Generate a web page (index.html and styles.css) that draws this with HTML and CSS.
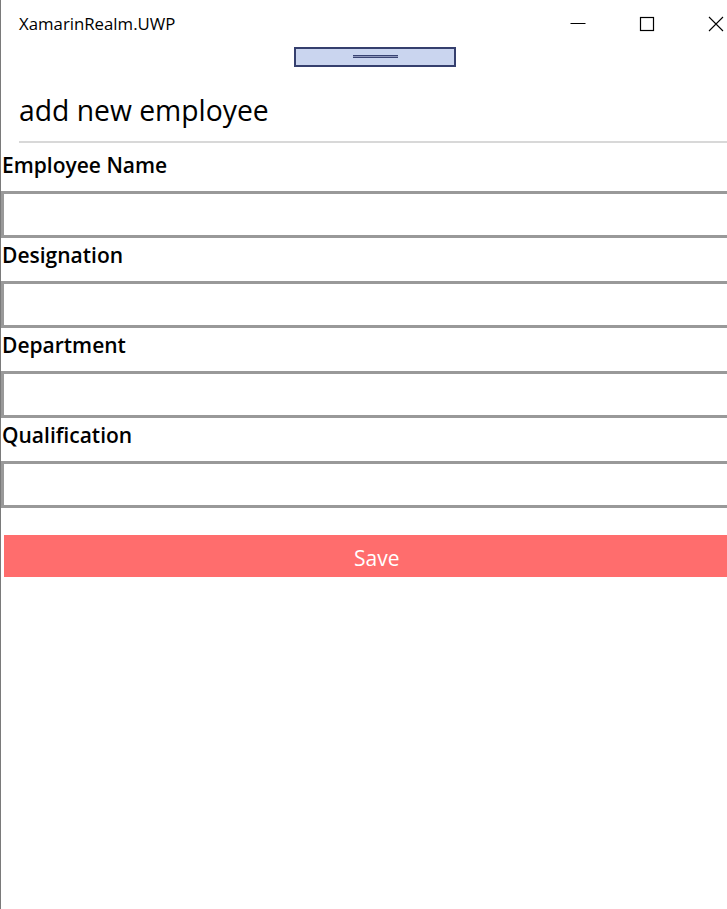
FILE: index.html
```html
<!DOCTYPE html>
<html lang="en">
<head>
<meta charset="utf-8">
<title>XamarinRealm.UWP</title>
<link rel="stylesheet" href="styles.css">
</head>
<body>
<div class="window">
  <div class="titlebar">
    <span class="app-title">XamarinRealm.UWP</span>
    <div class="controls">
      <div class="ctl">
        <svg width="16" height="16" viewBox="0 0 16 16"><path d="M0.5 7.5H15.5" stroke="#000" stroke-width="1"/></svg>
      </div>
      <div class="ctl">
        <svg width="16" height="16" viewBox="0 0 16 16"><rect x="1.5" y="1.5" width="13" height="13" fill="none" stroke="#000" stroke-width="1.2"/></svg>
      </div>
      <div class="ctl">
        <svg width="16" height="16" viewBox="0 0 16 16"><path d="M1 1L15 15M15 1L1 15" stroke="#000" stroke-width="1.1"/></svg>
      </div>
    </div>
  </div>
  <div class="grip-row">
    <div class="grip"><div class="grip-lines"></div></div>
  </div>
  <div class="page-header">
    <h1 class="page-title">add new employee</h1>
  </div>
  <form class="form">
    <label class="field-label first">Employee Name</label>
    <input class="field-input" type="text">
    <label class="field-label">Designation</label>
    <input class="field-input" type="text">
    <label class="field-label">Department</label>
    <input class="field-input" type="text">
    <label class="field-label">Qualification</label>
    <input class="field-input" type="text">
    <button class="save-btn" type="button">Save</button>
  </form>
</div>
</body>
</html>
```
FILE: styles.css
```css
html, body {
  margin: 0;
  padding: 0;
  background: #ffffff;
}
body {
  font-family: "Open Sans", "Noto Sans", sans-serif;
  color: #000;
}
.window {
  width: 727px;
  height: 909px;
  box-sizing: border-box;
  border-left: 1px solid #7a7a7a;
  overflow: hidden;
  position: relative;
}
.titlebar {
  height: 47px;
  display: flex;
  align-items: center;
  padding-left: 18px;
}
.app-title {
  font-size: 16.8px;
  color: #000;
  letter-spacing: 0;
}
.controls {
  margin-left: auto;
  margin-right: -23px;
  display: flex;
  align-self: stretch;
}
.ctl {
  width: 69px;
  display: flex;
  align-items: center;
  justify-content: center;
}
.grip-row {
  height: 20px;
  display: flex;
  padding-left: 293px;
}
.grip {
  width: 162px;
  height: 20px;
  box-sizing: border-box;
  border: 2px solid #353f6e;
  background: #cad5ef;
  display: flex;
  align-items: center;
  justify-content: center;
}
.grip-lines {
  width: 45px;
  height: 1px;
  border-top: 1px solid #3a4473;
  border-bottom: 1px solid #3a4473;
  background: #8e97bb;
  margin-bottom: 1px;
}
.page-header {
  position: relative;
  padding-top: 23px;
}
.page-header::before {
  content: "";
  position: absolute;
  left: -1px;
  top: 15px;
  width: 1px;
  height: 41px;
  background: #8a2b2e;
}
.page-title {
  margin: 0 0 0 18px;
  font-size: 28.3px;
  font-weight: 400;
  line-height: 40px;
  padding-bottom: 11px;
  border-bottom: 2px solid #d8d8d8;
}
.form {
  display: flex;
  flex-direction: column;
  margin: 0;
}
.field-label {
  display: block;
  height: 43px;
  box-sizing: border-box;
  padding-left: 1px;
  padding-top: 3px;
  font-size: 21px;
  font-weight: 600;
  line-height: 28px;
}
.field-label.first {
  height: 48px;
  padding-top: 8px;
}
.field-input {
  display: block;
  width: 740px;
  height: 47px;
  box-sizing: border-box;
  margin: 0;
  border: 3px solid #999999;
  border-right: none;
  background: #fff;
  padding: 0 8px;
  font-family: inherit;
  font-size: 18px;
  outline: none;
}
.save-btn {
  margin: 27px 0 0 3px;
  height: 42px;
  width: 740px;
  border: none;
  background: #ff6d6d;
  color: #ffffff;
  font-family: inherit;
  font-size: 21px;
  padding: 3px 0 0 350px;
  text-align: left;
}
```
